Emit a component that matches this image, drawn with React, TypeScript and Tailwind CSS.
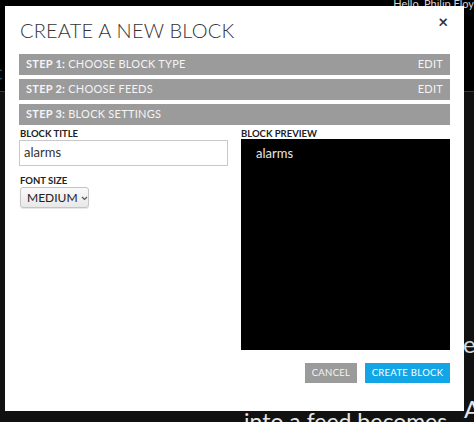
import React from "react";

const font = { fontFamily: '"Lato", "Open Sans", "Liberation Sans", sans-serif' };

function StepBar({ n, label, edit }: { n: number; label: string; edit?: boolean }) {
  return (
    <div className="flex h-[21px] items-center justify-between bg-[#9b9b9b] px-[7px] text-[11px] tracking-[0.25px] text-[#f4f4f4]">
      <div>
        <span className="font-bold">STEP {n}:</span> <span>{label}</span>
      </div>
      {edit && <span>EDIT</span>}
    </div>
  );
}

export default function App() {
  return (
    <div className="relative h-[422px] w-[474px] overflow-hidden bg-black" style={font}>
      {/* background page */}
      <div className="flex h-full flex-col">
        <div className="relative h-[91px] bg-black">
          <div className="absolute right-[-6px] top-[-4px] text-[11px] text-[#d6d6d6]">Hello, Philip Floyd</div>
          <div className="absolute left-[-8px] top-[62px] text-[16px] text-[#1d5a73]">C</div>
        </div>
        <div className="h-px bg-[#3a3a3a]" />
        <div className="relative flex-1 bg-[#111111]">
          <div className="absolute left-[463px] top-[240px] text-[24px] leading-none text-[#d8d8d8]">e</div>
          <div className="absolute left-[464px] top-[305px] text-[24px] leading-none text-[#e6e6e6]">A</div>
          <div className="absolute left-[244px] top-[318px] whitespace-nowrap text-[23px] leading-none text-[#e6e6e6]">
            into a feed becomes
          </div>
        </div>
      </div>

      {/* modal */}
      <div className="absolute left-[5px] top-[6px] flex h-[405px] w-[459px] flex-col bg-white px-[14px]">
        <button className="absolute right-[16px] top-[7px] text-[17px] font-bold leading-none text-[#333]">×</button>
        <h1 className="ml-[1px] mt-[12px] text-[20px] font-light leading-[24px] tracking-[0.2px] text-[#333]">
          CREATE A NEW BLOCK
        </h1>
        <div className="mt-[12px] flex flex-col gap-[4px]">
          <StepBar n={1} label="CHOOSE BLOCK TYPE" edit />
          <StepBar n={2} label="CHOOSE FEEDS" edit />
          <StepBar n={3} label="BLOCK SETTINGS" />
        </div>
        <div className="mt-[4px] flex gap-[13px]">
          <div className="flex w-[209px] flex-col">
            <label className="ml-[1px] text-[9.5px] font-bold leading-[10px] text-[#222]">BLOCK TITLE</label>
            <div className="mt-[1px] flex h-[26px] items-center border border-[#c8c8c8] px-[4px] text-[13px] text-[#333]">
              alarms
            </div>
            <label className="ml-[1px] mt-[10px] text-[9.5px] font-bold leading-[10px] text-[#222]">FONT SIZE</label>
            <div className="ml-[1px] mt-[1px] flex h-[21px] w-[69px] items-center gap-[3px] rounded-[3px] border border-[#c4c4c4] bg-gradient-to-b from-[#fafafa] to-[#e8e8e8] pl-[6px] text-[12px] text-[#222] shadow-[0_1px_1px_rgba(0,0,0,0.1)]">
              MEDIUM
              <svg width="7" height="5" viewBox="0 0 7 5" className="mt-[1px]">
                <path d="M1 1l2.5 2.5L6 1" stroke="#555" strokeWidth="1.2" fill="none" />
              </svg>
            </div>
          </div>
          <div className="flex w-[209px] flex-col">
            <label className="text-[9.5px] font-bold leading-[10px] text-[#222]">BLOCK PREVIEW</label>
            <div className="h-[211px] bg-black px-[15px] pt-[5px] text-[13px] text-[#e8e8e8]">alarms</div>
          </div>
        </div>
        <div className="mt-[13px] flex justify-end gap-[8px]">
          <button className="flex h-[20px] w-[52px] items-center justify-center bg-[#9b9b9b] text-[9.5px] tracking-[0.3px] text-[#f4f4f4]">
            CANCEL
          </button>
          <button className="flex h-[20px] w-[85px] items-center justify-center bg-[#13a6e6] text-[9.5px] tracking-[0.3px] text-white">
            CREATE BLOCK
          </button>
        </div>
      </div>
    </div>
  );
}
